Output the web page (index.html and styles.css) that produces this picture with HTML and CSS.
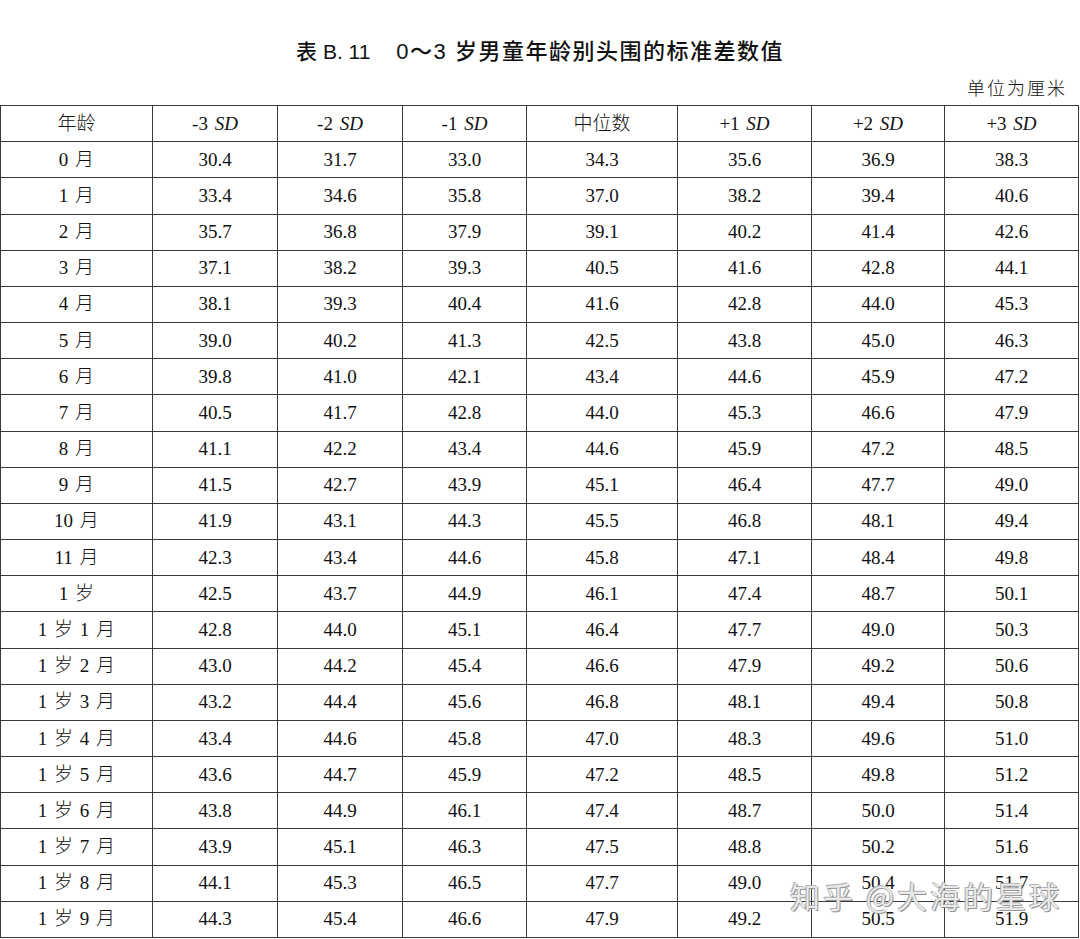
FILE: index.html
```html
<!DOCTYPE html>
<html lang="zh-CN">
<head>
<meta charset="utf-8">
<title>表 B.11 0～3 岁男童年龄别头围的标准差数值</title>
<link rel="stylesheet" href="styles.css">
</head>
<body>
<div class="page">
  <h1 class="title"><span class="tno">表 B. 11</span><span class="tname">0～3 岁男童年龄别头围的标准差数值</span></h1>
  <div class="unit">单位为厘米</div>
  <table class="sd">
    <colgroup>
      <col class="c-age"><col class="c-n1"><col class="c-n2"><col class="c-n3"><col class="c-med"><col class="c-p1"><col class="c-p2"><col class="c-p3">
    </colgroup>
    <thead>
      <tr><th>年龄</th><th>-3 <i>SD</i></th><th>-2 <i>SD</i></th><th>-1 <i>SD</i></th><th>中位数</th><th>+1 <i>SD</i></th><th>+2 <i>SD</i></th><th>+3 <i>SD</i></th></tr>
    </thead>
    <tbody>
      <tr><td>0 月</td><td>30.4</td><td>31.7</td><td>33.0</td><td>34.3</td><td>35.6</td><td>36.9</td><td>38.3</td></tr>
      <tr><td>1 月</td><td>33.4</td><td>34.6</td><td>35.8</td><td>37.0</td><td>38.2</td><td>39.4</td><td>40.6</td></tr>
      <tr><td>2 月</td><td>35.7</td><td>36.8</td><td>37.9</td><td>39.1</td><td>40.2</td><td>41.4</td><td>42.6</td></tr>
      <tr><td>3 月</td><td>37.1</td><td>38.2</td><td>39.3</td><td>40.5</td><td>41.6</td><td>42.8</td><td>44.1</td></tr>
      <tr><td>4 月</td><td>38.1</td><td>39.3</td><td>40.4</td><td>41.6</td><td>42.8</td><td>44.0</td><td>45.3</td></tr>
      <tr><td>5 月</td><td>39.0</td><td>40.2</td><td>41.3</td><td>42.5</td><td>43.8</td><td>45.0</td><td>46.3</td></tr>
      <tr><td>6 月</td><td>39.8</td><td>41.0</td><td>42.1</td><td>43.4</td><td>44.6</td><td>45.9</td><td>47.2</td></tr>
      <tr><td>7 月</td><td>40.5</td><td>41.7</td><td>42.8</td><td>44.0</td><td>45.3</td><td>46.6</td><td>47.9</td></tr>
      <tr><td>8 月</td><td>41.1</td><td>42.2</td><td>43.4</td><td>44.6</td><td>45.9</td><td>47.2</td><td>48.5</td></tr>
      <tr><td>9 月</td><td>41.5</td><td>42.7</td><td>43.9</td><td>45.1</td><td>46.4</td><td>47.7</td><td>49.0</td></tr>
      <tr><td>10 月</td><td>41.9</td><td>43.1</td><td>44.3</td><td>45.5</td><td>46.8</td><td>48.1</td><td>49.4</td></tr>
      <tr><td>11 月</td><td>42.3</td><td>43.4</td><td>44.6</td><td>45.8</td><td>47.1</td><td>48.4</td><td>49.8</td></tr>
      <tr><td>1 岁</td><td>42.5</td><td>43.7</td><td>44.9</td><td>46.1</td><td>47.4</td><td>48.7</td><td>50.1</td></tr>
      <tr><td>1 岁 1 月</td><td>42.8</td><td>44.0</td><td>45.1</td><td>46.4</td><td>47.7</td><td>49.0</td><td>50.3</td></tr>
      <tr><td>1 岁 2 月</td><td>43.0</td><td>44.2</td><td>45.4</td><td>46.6</td><td>47.9</td><td>49.2</td><td>50.6</td></tr>
      <tr><td>1 岁 3 月</td><td>43.2</td><td>44.4</td><td>45.6</td><td>46.8</td><td>48.1</td><td>49.4</td><td>50.8</td></tr>
      <tr><td>1 岁 4 月</td><td>43.4</td><td>44.6</td><td>45.8</td><td>47.0</td><td>48.3</td><td>49.6</td><td>51.0</td></tr>
      <tr><td>1 岁 5 月</td><td>43.6</td><td>44.7</td><td>45.9</td><td>47.2</td><td>48.5</td><td>49.8</td><td>51.2</td></tr>
      <tr><td>1 岁 6 月</td><td>43.8</td><td>44.9</td><td>46.1</td><td>47.4</td><td>48.7</td><td>50.0</td><td>51.4</td></tr>
      <tr><td>1 岁 7 月</td><td>43.9</td><td>45.1</td><td>46.3</td><td>47.5</td><td>48.8</td><td>50.2</td><td>51.6</td></tr>
      <tr><td>1 岁 8 月</td><td>44.1</td><td>45.3</td><td>46.5</td><td>47.7</td><td>49.0</td><td>50.4</td><td>51.7</td></tr>
      <tr><td>1 岁 9 月</td><td>44.3</td><td>45.4</td><td>46.6</td><td>47.9</td><td>49.2</td><td>50.5</td><td>51.9</td></tr>
    </tbody>
  </table>
  <div class="watermark">知乎 @大海的星球</div>
</div>
</body>
</html>
```
FILE: styles.css
```css
html, body {
  margin: 0;
  padding: 0;
  background: #ffffff;
}
.page {
  position: relative;
  width: 1080px;
  height: 939px;
  overflow: hidden;
  color: #111111;
  font-family: "Liberation Serif", "Noto Sans CJK SC", serif;
}
.title {
  margin: 0;
  padding-top: 38px;
  height: 28px;
  line-height: 28px;
  text-align: center;
  font-family: "Liberation Sans", "Noto Sans CJK SC", sans-serif;
  font-size: 22px;
  font-weight: 500;
  color: #111111;
}
.tno {
  margin-right: 26px;
  font-size: 21px;
}
.tname {
  letter-spacing: 1.5px;
}
.unit {
  height: 26px;
  line-height: 26px;
  margin-top: 8px;
  padding-right: 13px;
  text-align: right;
  font-family: "Noto Sans CJK SC", sans-serif;
  font-size: 18px;
  font-weight: 300;
  letter-spacing: 2px;
  color: #111111;
}
.sd {
  border-collapse: collapse;
  table-layout: fixed;
  width: 1078px;
  margin-top: 5px;
}
.c-age { width: 152px; }
.c-n1 { width: 125px; }
.c-n2 { width: 125px; }
.c-n3 { width: 124px; }
.c-med { width: 151px; }
.c-p1 { width: 134px; }
.c-p2 { width: 133px; }
.c-p3 { width: 134px; }
.sd th, .sd td {
  border: 1px solid #3a3a3a;
  padding: 0;
  height: 35.18px;
  text-align: center;
  vertical-align: middle;
  font-size: 19px;
  font-weight: 300;
  line-height: 20px;
  word-spacing: 2px;
  color: #111111;
}
.sd th i {
  font-style: italic;
}
.watermark {
  position: absolute;
  left: 790px;
  top: 873px;
  font-family: "Noto Sans CJK SC", sans-serif;
  font-size: 30px;
  letter-spacing: 3px;
  color: rgba(255, 255, 255, 0.85);
  text-shadow: 0 0 1px #777, 1px 1px 0 #999, -1px -1px 0 #bbb;
}
```
